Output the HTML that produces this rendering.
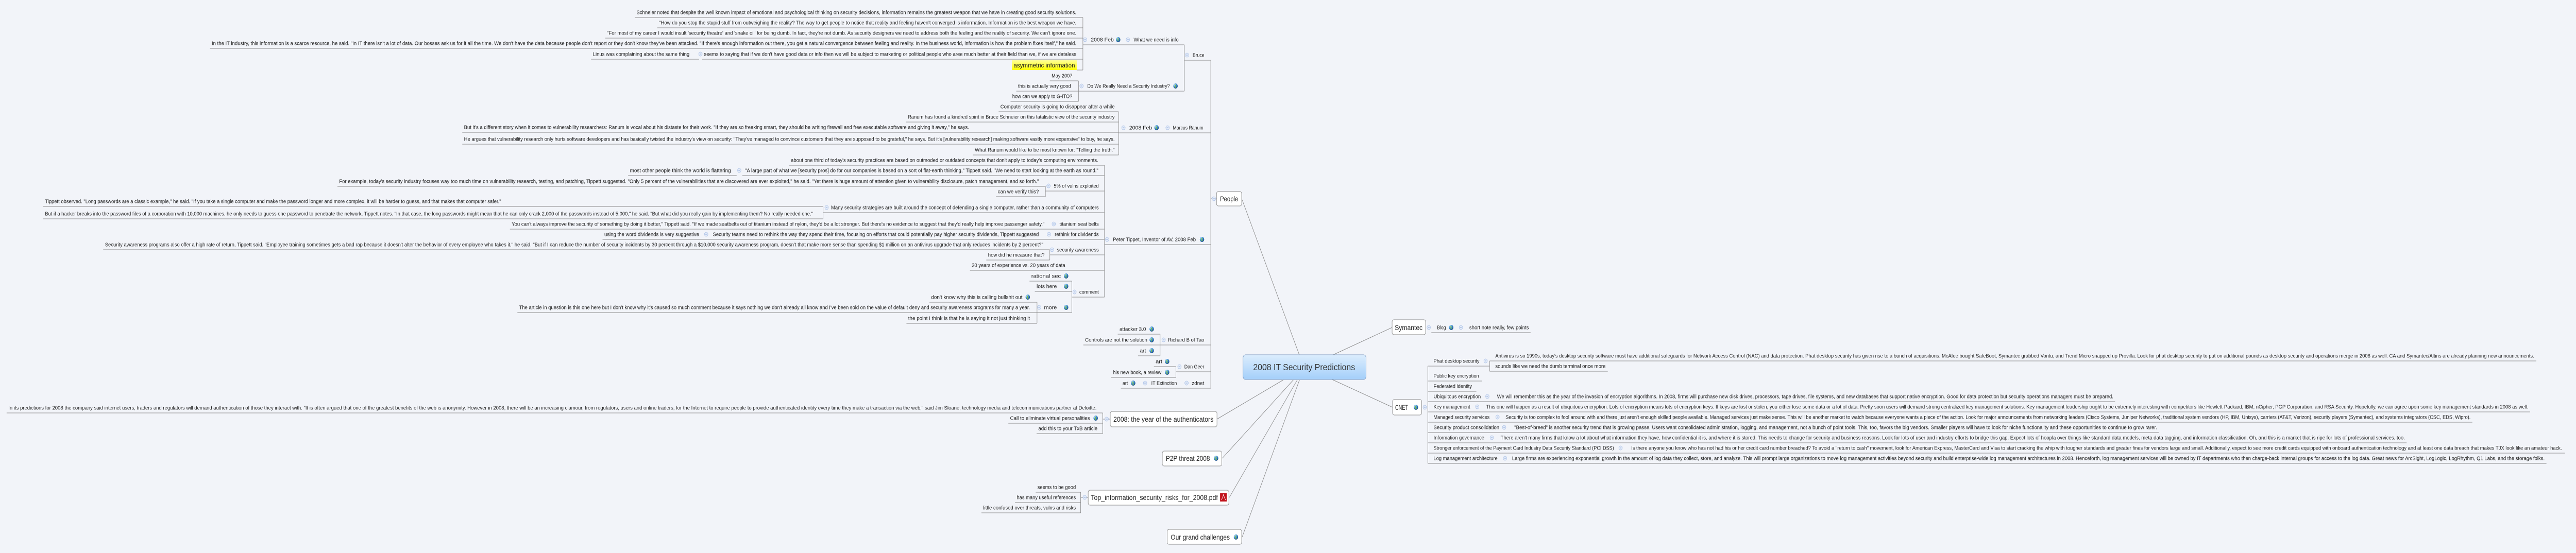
<!DOCTYPE html>
<html><head><meta charset="utf-8"><style>
html,body{margin:0;padding:0;background:#f2f4f9;overflow:hidden;}
svg{display:block;width:100vw;height:100vh}
.t{font-family:"Liberation Sans Narrow","Liberation Sans",sans-serif;font-size:10px;fill:#1b1b1b}
.b{font-family:"Liberation Sans Narrow","Liberation Sans",sans-serif;font-size:14px;fill:#222}
.l{stroke:#8a8a8a;stroke-width:1;fill:none}
.bx{fill:#fff;stroke:#8a8a8a;stroke-width:1}
</style></head><body>
<svg viewBox="0 0 5840 1074" preserveAspectRatio="none" xmlns="http://www.w3.org/2000/svg">
<defs>
<radialGradient id="gg" cx="35%" cy="30%" r="70%"><stop offset="0" stop-color="#d8f0ff"/><stop offset="0.5" stop-color="#3f8fd0"/><stop offset="1" stop-color="#1d4f8a"/></radialGradient>
<g id="g"><circle r="5" fill="url(#gg)"/><path d="M-2,-3 L1,-2 L0,1 L2,3 L-1,3 Z" fill="#7cbf4a"/></g>
<g id="m"><circle r="4" fill="#e3ebf8" stroke="#a9bfe6" stroke-width="0.8"/><line x1="-2" y1="0" x2="2" y2="0" stroke="#7f9dd6" stroke-width="0.8"/></g>
<linearGradient id="cg" x1="0" y1="0" x2="0" y2="1"><stop offset="0" stop-color="#dcedfd"/><stop offset="1" stop-color="#a4cffa"/></linearGradient>
<linearGradient id="yg" x1="0" y1="0" x2="0" y2="1"><stop offset="0" stop-color="#ffff99"/><stop offset="1" stop-color="#ffff00"/></linearGradient>
</defs>
<rect width="5840" height="1074" fill="#f2f4f9"/>

<g class="l">
<line x1="2816" y1="388" x2="2946" y2="690"/>
<line x1="3020" y1="690" x2="3156" y2="636"/>
<line x1="3020" y1="737" x2="3157" y2="791"/>
<line x1="2909" y1="738" x2="2759" y2="814"/>
<line x1="2932" y1="738" x2="2771" y2="890"/>
<line x1="2941" y1="738" x2="2787" y2="966"/>
<line x1="2946" y1="738" x2="2816" y2="1043"/>
</g>

<rect x="2818" y="689" width="279" height="48" rx="6" fill="url(#cg)" stroke="#7d9cc2"/>
<text class="b" x="2841" y="719" style="font-size:18px;fill:#333" textLength="231" lengthAdjust="spacingAndGlyphs">2008 IT Security Predictions</text>

<g class="l">
<line x1="1439" y1="34" x2="2455" y2="34"/>
<line x1="1490" y1="54" x2="2455" y2="54"/>
<line x1="1372" y1="74" x2="2455" y2="74"/>
<line x1="476" y1="94" x2="2455" y2="94"/>
<line x1="1340" y1="115" x2="1585" y2="115"/>
<line x1="1592" y1="115" x2="2455" y2="115"/>
<line x1="2441" y1="136" x2="2455" y2="136"/>
<line x1="2455" y1="34" x2="2455" y2="136"/>
<line x1="2455" y1="87" x2="2555" y2="87"/>
<line x1="2555" y1="87" x2="2685" y2="87"/>
<line x1="2685" y1="87" x2="2685" y2="177"/>
<line x1="2685" y1="117" x2="2745" y2="117"/>
<line x1="2380" y1="157" x2="2445" y2="157"/>
<line x1="2304" y1="177" x2="2445" y2="177"/>
<line x1="2291" y1="197" x2="2445" y2="197"/>
<line x1="2445" y1="157" x2="2445" y2="197"/>
<line x1="2445" y1="177" x2="2685" y2="177"/>
</g>
<text class="t" x="1443" y="27.5" textLength="997" lengthAdjust="spacingAndGlyphs">Schneier noted that despite the well known impact of emotional and psychological thinking on security decisions, information remains the greatest weapon that we have in creating good security solutions.</text>
<text class="t" x="1494" y="47.5" textLength="946" lengthAdjust="spacingAndGlyphs">"How do you stop the stupid stuff from outweighing the reality? The way to get people to notice that reality and feeling haven't converged is information. Information is the best weapon we have.</text>
<text class="t" x="1376" y="67.5" textLength="1064" lengthAdjust="spacingAndGlyphs">"For most of my career I would insult 'security theatre' and 'snake oil' for being dumb. In fact, they're not dumb. As security designers we need to address both the feeling and the reality of security. We can't ignore one.</text>
<text class="t" x="480" y="87.5" textLength="1960" lengthAdjust="spacingAndGlyphs">In the IT industry, this information is a scarce resource, he said. "In IT there isn't a lot of data. Our bosses ask us for it all the time. We don't have the data because people don't report or they don't know they've been attacked. "If there's enough information out there, you get a natural convergence between feeling and reality. In the business world, information is how the problem fixes itself," he said.</text>
<text class="t" x="1344" y="108.5" textLength="219" lengthAdjust="spacingAndGlyphs">Linus was complaining about the same thing</text>
<use href="#m" x="1588" y="105"/>
<text class="t" x="1596" y="108.5" textLength="844" lengthAdjust="spacingAndGlyphs">seems to saying that if we don't have good data or info then we will be subject to marketing or political people who aree much better at their field than we, if we are dataless</text>
<rect x="2294" y="117" width="147" height="19" fill="url(#yg)"/>
<text class="t" x="2298" y="131" style="font-size:12px" textLength="139" lengthAdjust="spacingAndGlyphs">asymmetric information</text>
<use href="#m" x="2460" y="77"/>
<text class="t" x="2473" y="80.5" textLength="52" lengthAdjust="spacingAndGlyphs">2008 Feb</text>
<use href="#g" x="2535" y="77"/>
<use href="#m" x="2557" y="77"/>
<text class="t" x="2570" y="80.5" textLength="102" lengthAdjust="spacingAndGlyphs">What we need is info</text>
<use href="#m" x="2691" y="107"/>
<text class="t" x="2704" y="110.5" textLength="26" lengthAdjust="spacingAndGlyphs">Bruce</text>
<text class="t" x="2384" y="150.5" textLength="47" lengthAdjust="spacingAndGlyphs">May 2007</text>
<text class="t" x="2308" y="170.5" textLength="120" lengthAdjust="spacingAndGlyphs">this is actually very good</text>
<text class="t" x="2295" y="190.5" textLength="136" lengthAdjust="spacingAndGlyphs">how can we apply to G-ITO?</text>
<use href="#m" x="2452" y="167"/>
<text class="t" x="2465" y="170.5" textLength="187" lengthAdjust="spacingAndGlyphs">Do We Really Need a Security Industry?</text>
<use href="#g" x="2665" y="167"/>

<g class="l">
<line x1="2264" y1="217" x2="2536" y2="217"/>
<line x1="2054" y1="237" x2="2536" y2="237"/>
<line x1="1048" y1="257" x2="2536" y2="257"/>
<line x1="1048" y1="280" x2="2536" y2="280"/>
<line x1="2206" y1="301" x2="2536" y2="301"/>
<line x1="2536" y1="217" x2="2536" y2="301"/>
<line x1="2536" y1="258" x2="2745" y2="258"/>
</g>
<text class="t" x="2268" y="210.5" textLength="259" lengthAdjust="spacingAndGlyphs">Computer security is going to disappear after a while</text>
<text class="t" x="2058" y="230.5" textLength="469" lengthAdjust="spacingAndGlyphs">Ranum has found a kindred spirit in Bruce Schneier on this fatalistic view of the security industry</text>
<text class="t" x="1052" y="250.5" textLength="1145" lengthAdjust="spacingAndGlyphs">But it's a different story when it comes to vulnerability researchers: Ranum is vocal about his distaste for their work. "If they are so freaking smart, they should be writing firewall and free executable software and giving it away," he says.</text>
<text class="t" x="1052" y="273.5" textLength="1475" lengthAdjust="spacingAndGlyphs">He argues that vulnerability research only hurts software developers and has basically twisted the industry's view on security: "They've managed to convince customers that they are supposed to be grateful," he says. But it's [vulnerability research] making software vastly more expensive" to buy, he says.</text>
<text class="t" x="2210" y="294.5" textLength="317" lengthAdjust="spacingAndGlyphs">What Ranum would like to be most known for: "Telling the truth."</text>
<use href="#m" x="2547" y="248"/>
<text class="t" x="2560" y="251.5" textLength="52" lengthAdjust="spacingAndGlyphs">2008 Feb</text>
<use href="#g" x="2622" y="248"/>
<use href="#m" x="2647" y="248"/>
<text class="t" x="2659" y="251.5" textLength="69" lengthAdjust="spacingAndGlyphs">Marcus Ranum</text>

<g class="l">
<line x1="1789" y1="321" x2="2504" y2="321"/>
<line x1="1424" y1="341" x2="1670" y2="341"/>
<line x1="1683" y1="341" x2="2504" y2="341"/>
<line x1="765" y1="362" x2="2370" y2="362"/>
<line x1="2258" y1="382" x2="2370" y2="382"/>
<line x1="2370" y1="362" x2="2370" y2="382"/>
<line x1="2370" y1="371" x2="2504" y2="371"/>
<line x1="98" y1="401" x2="1866" y2="401"/>
<line x1="98" y1="425" x2="1866" y2="425"/>
<line x1="1866" y1="401" x2="1866" y2="425"/>
<line x1="1866" y1="413" x2="2504" y2="413"/>
<line x1="1156" y1="445" x2="2504" y2="445"/>
<line x1="1366" y1="465" x2="2504" y2="465"/>
<line x1="234" y1="485" x2="2380" y2="485"/>
<line x1="2236" y1="505" x2="2380" y2="505"/>
<line x1="2380" y1="485" x2="2380" y2="505"/>
<line x1="2380" y1="495" x2="2504" y2="495"/>
<line x1="2199" y1="525" x2="2504" y2="525"/>
<line x1="2334" y1="546" x2="2430" y2="546"/>
<line x1="2346" y1="566" x2="2430" y2="566"/>
<line x1="2107" y1="587" x2="2351" y2="587"/>
<line x1="1173" y1="607" x2="2430" y2="607"/>
<line x1="2055" y1="628" x2="2351" y2="628"/>
<line x1="2351" y1="587" x2="2351" y2="628"/>
<line x1="2430" y1="546" x2="2430" y2="607"/>
<line x1="2430" y1="577" x2="2504" y2="577"/>
<line x1="2504" y1="321" x2="2504" y2="577"/>
<line x1="2504" y1="475" x2="2745" y2="475"/>
</g>
<text class="t" x="1793" y="314.5" textLength="697" lengthAdjust="spacingAndGlyphs">about one third of today's security practices are based on outmoded or outdated concepts that don't apply to today's computing environments.</text>
<text class="t" x="1428" y="334.5" textLength="229" lengthAdjust="spacingAndGlyphs">most other people think the world is flattering</text>
<use href="#m" x="1676" y="331"/>
<text class="t" x="1689" y="334.5" textLength="801" lengthAdjust="spacingAndGlyphs">"A large part of what we [security pros] do for our companies is based on a sort of flat-earth thinking," Tippett said. "We need to start looking at the earth as round."</text>
<text class="t" x="769" y="355.5" textLength="1586" lengthAdjust="spacingAndGlyphs">For example, today's security industry focuses way too much time on vulnerability research, testing, and patching, Tippett suggested. "Only 5 percent of the vulnerabilities that are discovered are ever exploited," he said. "Yet there is huge amount of attention given to vulnerability disclosure, patch management, and so forth."</text>
<text class="t" x="2262" y="375.5" textLength="93" lengthAdjust="spacingAndGlyphs">can we verify this?</text>
<use href="#m" x="2377" y="361"/>
<text class="t" x="2389" y="364.5" textLength="102" lengthAdjust="spacingAndGlyphs">5% of vulns exploited</text>
<text class="t" x="102" y="394.5" textLength="1034" lengthAdjust="spacingAndGlyphs">Tippett observed. "Long passwords are a classic example," he said. "If you take a single computer and make the password longer and more complex, it will be harder to guess, and that makes that computer safer."</text>
<text class="t" x="102" y="418.5" textLength="1741" lengthAdjust="spacingAndGlyphs">But if a hacker breaks into the password files of a corporation with 10,000 machines, he only needs to guess one password to penetrate the network, Tippett notes. "In that case, the long passwords might mean that he can only crack 2,000 of the passwords instead of 5,000," he said. "But what did you really gain by implementing them? No really needed one."</text>
<use href="#m" x="1874" y="403"/>
<text class="t" x="1884" y="406.5" textLength="607" lengthAdjust="spacingAndGlyphs">Many security strategies are built around the concept of defending a single computer, rather than a community of computers</text>
<text class="t" x="1160" y="438.5" textLength="1208" lengthAdjust="spacingAndGlyphs">You can't always improve the security of something by doing it better," Tippett said. "If we made seatbelts out of titanium instead of nylon, they'd be a lot stronger. But there's no evidence to suggest that they'd really help improve passenger safety."</text>
<use href="#m" x="2389" y="435"/>
<text class="t" x="2402" y="438.5" textLength="89" lengthAdjust="spacingAndGlyphs">titanium seat belts</text>
<text class="t" x="1370" y="458.5" textLength="215" lengthAdjust="spacingAndGlyphs">using the word dividends is very suggestive</text>
<use href="#m" x="1601" y="455"/>
<text class="t" x="1616" y="458.5" textLength="739" lengthAdjust="spacingAndGlyphs">Security teams need to rethink the way they spend their time, focusing on efforts that could potentially pay higher security dividends, Tippett suggested</text>
<use href="#m" x="2378" y="455"/>
<text class="t" x="2391" y="458.5" textLength="100" lengthAdjust="spacingAndGlyphs">rethink for dividends</text>
<text class="t" x="238" y="478.5" textLength="2127" lengthAdjust="spacingAndGlyphs">Security awareness programs also offer a high rate of return, Tippett said. "Employee training sometimes gets a bad rap because it doesn't alter the behavior of every employee who takes it," he said. "But if I can reduce the number of security incidents by 30 percent through a $10,000 security awareness program, doesn't that make more sense than spending $1 million on an antivirus upgrade that only reduces incidents by 2 percent?"</text>
<text class="t" x="2240" y="498.5" textLength="128" lengthAdjust="spacingAndGlyphs">how did he measure that?</text>
<use href="#m" x="2385" y="485"/>
<text class="t" x="2396" y="488.5" textLength="95" lengthAdjust="spacingAndGlyphs">security awareness</text>
<text class="t" x="2203" y="518.5" textLength="212" lengthAdjust="spacingAndGlyphs">20 years of experience vs. 20 years of data</text>
<text class="t" x="2338" y="539.5" textLength="67" lengthAdjust="spacingAndGlyphs">rational sec</text>
<use href="#g" x="2417" y="536"/>
<text class="t" x="2350" y="559.5" textLength="46" lengthAdjust="spacingAndGlyphs">lots here</text>
<use href="#g" x="2417" y="556"/>
<text class="t" x="2111" y="580.5" textLength="207" lengthAdjust="spacingAndGlyphs">don't know why this is calling bullshit out</text>
<use href="#g" x="2330" y="577"/>
<text class="t" x="1177" y="600.5" textLength="1158" lengthAdjust="spacingAndGlyphs">The article in question is this one here but I don't know why it's caused so much comment because it says nothing we don't already all know and I've been sold on the value of default deny and security awareness programs for many a year.</text>
<text class="t" x="2059" y="621.5" textLength="276" lengthAdjust="spacingAndGlyphs">the point I think is that he is saying it not just thinking it</text>
<use href="#m" x="2356" y="597"/>
<text class="t" x="2367" y="600.5" textLength="29" lengthAdjust="spacingAndGlyphs">more</text>
<use href="#g" x="2417" y="597"/>
<use href="#m" x="2436" y="567"/>
<text class="t" x="2447" y="570.5" textLength="44" lengthAdjust="spacingAndGlyphs">comment</text>
<use href="#m" x="2510" y="465"/>
<text class="t" x="2523" y="468.5" textLength="188" lengthAdjust="spacingAndGlyphs">Peter Tippet, Inventor of AV, 2008 Feb</text>
<use href="#g" x="2725" y="465"/>

<g class="l">
<line x1="2534" y1="649" x2="2630" y2="649"/>
<line x1="2456" y1="670" x2="2630" y2="670"/>
<line x1="2580" y1="691" x2="2630" y2="691"/>
<line x1="2630" y1="649" x2="2630" y2="691"/>
<line x1="2630" y1="670" x2="2745" y2="670"/>
<line x1="2616" y1="712" x2="2666" y2="712"/>
<line x1="2519" y1="733" x2="2666" y2="733"/>
<line x1="2666" y1="712" x2="2666" y2="733"/>
<line x1="2666" y1="722" x2="2745" y2="722"/>
<line x1="2541" y1="754" x2="2745" y2="754"/>
<line x1="2745" y1="117" x2="2745" y2="754"/>
<line x1="2745" y1="386" x2="2758" y2="386"/>
</g>
<text class="t" x="2538" y="642.5" textLength="60" lengthAdjust="spacingAndGlyphs">attacker 3.0</text>
<use href="#g" x="2611" y="639"/>
<text class="t" x="2460" y="663.5" textLength="141" lengthAdjust="spacingAndGlyphs">Controls are not the solution</text>
<use href="#g" x="2611" y="660"/>
<text class="t" x="2584" y="684.5" textLength="14" lengthAdjust="spacingAndGlyphs">art</text>
<use href="#g" x="2611" y="681"/>
<use href="#m" x="2638" y="660"/>
<text class="t" x="2648" y="663.5" textLength="82" lengthAdjust="spacingAndGlyphs">Richard B of Tao</text>
<text class="t" x="2620" y="705.5" textLength="15" lengthAdjust="spacingAndGlyphs">art</text>
<use href="#g" x="2646" y="702"/>
<text class="t" x="2523" y="726.5" textLength="110" lengthAdjust="spacingAndGlyphs">his new book, a review</text>
<use href="#g" x="2646" y="723"/>
<use href="#m" x="2674" y="712"/>
<text class="t" x="2685" y="715.5" textLength="45" lengthAdjust="spacingAndGlyphs">Dan Geer</text>
<text class="t" x="2545" y="747.5" textLength="12" lengthAdjust="spacingAndGlyphs">art</text>
<use href="#g" x="2569" y="744"/>
<use href="#m" x="2596" y="744"/>
<text class="t" x="2610" y="747.5" textLength="58" lengthAdjust="spacingAndGlyphs">IT Extinction</text>
<use href="#m" x="2690" y="744"/>
<text class="t" x="2702" y="747.5" textLength="28" lengthAdjust="spacingAndGlyphs">zdnet</text>
<rect class="bx" x="2758" y="372" width="57" height="28" rx="4"/>
<use href="#m" x="2752" y="386"/>
<text class="b" x="2766" y="391" textLength="41" lengthAdjust="spacingAndGlyphs">People</text>

<g class="l">
<line x1="15" y1="802" x2="2500" y2="802"/>
<line x1="2286" y1="822" x2="2500" y2="822"/>
<line x1="2350" y1="842" x2="2500" y2="842"/>
<line x1="2500" y1="802" x2="2500" y2="842"/>
<line x1="2500" y1="814" x2="2517" y2="814"/>
</g>
<text class="t" x="19" y="795.5" textLength="2467" lengthAdjust="spacingAndGlyphs">In its predictions for 2008 the company said internet users, traders and regulators will demand authentication of those they interact with.  "It is often argued that one of the greatest benefits of the web is anonymity. However in 2008, there will be an increasing clamour, from regulators, users and online traders, for the Internet to require people to provide authenticated identity every time they make a transaction via the web," said Jim Sloane, technology media and telecommunications partner at Deloitte.</text>
<text class="t" x="2290" y="815.5" textLength="181" lengthAdjust="spacingAndGlyphs">Call to eliminate virtual personalities</text>
<use href="#g" x="2484" y="812"/>
<text class="t" x="2354" y="835.5" textLength="134" lengthAdjust="spacingAndGlyphs">add this to your TxB article</text>
<rect class="bx" x="2517" y="799" width="242" height="30" rx="4"/>
<use href="#m" x="2509" y="814"/>
<text class="b" x="2524" y="819" textLength="227" lengthAdjust="spacingAndGlyphs">2008: the year of the authenticators</text>

<rect class="bx" x="2635" y="876" width="135" height="29" rx="4"/>
<text class="b" x="2643" y="895" textLength="100" lengthAdjust="spacingAndGlyphs">P2P threat 2008</text>
<use href="#g" x="2757" y="890"/>

<g class="l">
<line x1="2348" y1="956" x2="2450" y2="956"/>
<line x1="2301" y1="976" x2="2450" y2="976"/>
<line x1="2225" y1="996" x2="2450" y2="996"/>
<line x1="2450" y1="956" x2="2450" y2="996"/>
<line x1="2450" y1="966" x2="2467" y2="966"/>
</g>
<text class="t" x="2352" y="949.5" textLength="87" lengthAdjust="spacingAndGlyphs">seems to be good</text>
<text class="t" x="2305" y="969.5" textLength="134" lengthAdjust="spacingAndGlyphs">has many useful references</text>
<text class="t" x="2229" y="989.5" textLength="210" lengthAdjust="spacingAndGlyphs">little confused over threats, vulns and risks</text>
<rect class="bx" x="2467" y="952" width="319" height="29" rx="4"/>
<use href="#m" x="2459" y="966"/>
<text class="b" x="2473" y="971" textLength="288" lengthAdjust="spacingAndGlyphs">Top_information_security_risks_for_2008.pdf</text>
<rect x="2766" y="958" width="15" height="16" fill="#c1121b"/>
<path d="M2769,971 C2772,966 2774,962 2773,960 C2775,963 2776,968 2779,971" stroke="#fff" stroke-width="1" fill="none"/>

<rect class="bx" x="2646" y="1028" width="169" height="29" rx="4"/>
<text class="b" x="2654" y="1048" textLength="134" lengthAdjust="spacingAndGlyphs">Our grand challenges</text>
<use href="#g" x="2802" y="1043"/>

<rect class="bx" x="3156" y="621" width="76" height="29" rx="4"/>
<text class="b" x="3162" y="641" textLength="63" lengthAdjust="spacingAndGlyphs">Symantec</text>
<use href="#m" x="3239" y="636"/>
<g class="l">
<line x1="3245" y1="646" x2="3470" y2="646"/>
</g>
<text class="t" x="3258" y="639.5" textLength="20" lengthAdjust="spacingAndGlyphs">Blog</text>
<use href="#g" x="3290" y="636"/>
<use href="#m" x="3312" y="636"/>
<text class="t" x="3331" y="639.5" textLength="135" lengthAdjust="spacingAndGlyphs">short note really, few points</text>

<rect class="bx" x="3157" y="776" width="66" height="30" rx="4"/>
<text class="b" x="3163" y="796" textLength="29" lengthAdjust="spacingAndGlyphs">CNET</text>
<use href="#g" x="3210" y="791"/>
<use href="#m" x="3230" y="791"/>
<g class="l">
<line x1="3237" y1="711" x2="3237" y2="900"/>
<line x1="3237" y1="711" x2="3377" y2="711"/>
<line x1="3377" y1="701" x2="3377" y2="721"/>
<line x1="3377" y1="701" x2="5750" y2="701"/>
<line x1="3377" y1="721" x2="3645" y2="721"/>
<line x1="3237" y1="740" x2="3360" y2="740"/>
<line x1="3237" y1="760" x2="3347" y2="760"/>
<line x1="3237" y1="780" x2="4795" y2="780"/>
<line x1="3237" y1="800" x2="5736" y2="800"/>
<line x1="3237" y1="820" x2="5605" y2="820"/>
<line x1="3237" y1="840" x2="4894" y2="840"/>
<line x1="3237" y1="860" x2="5456" y2="860"/>
<line x1="3237" y1="880" x2="5815" y2="880"/>
<line x1="3237" y1="900" x2="5773" y2="900"/>
</g>
<text class="t" x="3250" y="704.5" textLength="104" lengthAdjust="spacingAndGlyphs">Phat desktop security</text>
<use href="#m" x="3368" y="701"/>
<text class="t" x="3390" y="694.5" textLength="2355" lengthAdjust="spacingAndGlyphs">Antivirus is so 1990s, today's desktop security software must have additional safeguards for Network Access Control (NAC) and data protection. Phat desktop security has given rise to a bunch of acquisitions: McAfee bought SafeBoot, Symantec grabbed Vontu, and Trend Micro snapped up Provilla. Look for phat desktop security to put on additional pounds as desktop security and operations merge in 2008 as well. CA and Symantec/Altiris are already planning new announcements.</text>
<text class="t" x="3390" y="714.5" textLength="250" lengthAdjust="spacingAndGlyphs">sounds like we need the dumb terminal once more</text>
<text class="t" x="3250" y="733.5" textLength="103" lengthAdjust="spacingAndGlyphs">Public key encryption</text>
<text class="t" x="3250" y="753.5" textLength="87" lengthAdjust="spacingAndGlyphs">Federated identity</text>
<text class="t" x="3250" y="773.5" textLength="107" lengthAdjust="spacingAndGlyphs">Ubiquitous encryption</text>
<use href="#m" x="3372" y="770"/>
<text class="t" x="3394" y="773.5" textLength="1397" lengthAdjust="spacingAndGlyphs">We will remember this as the year of the invasion of encryption algorithms. In 2008, firms will purchase new disk drives, processors, tape drives, file systems, and new databases that support native encryption. Good for data protection but security operations managers must be prepared.</text>
<text class="t" x="3250" y="793.5" textLength="83" lengthAdjust="spacingAndGlyphs">Key management</text>
<use href="#m" x="3349" y="790"/>
<text class="t" x="3369" y="793.5" textLength="2363" lengthAdjust="spacingAndGlyphs">This one will happen as a result of ubiquitous encryption. Lots of encryption means lots of encryption keys. If keys are lost or stolen, you either lose some data or a lot of data. Pretty soon users will demand strong centralized key management solutions. Key management leadership ought to be extremely interesting with competitors like Hewlett-Packard, IBM, nCipher, PGP Corporation, and RSA Security. Hopefully, we can agree upon some key management standards in 2008 as well.</text>
<text class="t" x="3250" y="813.5" textLength="127" lengthAdjust="spacingAndGlyphs">Managed security services</text>
<use href="#m" x="3395" y="810"/>
<text class="t" x="3413" y="813.5" textLength="2188" lengthAdjust="spacingAndGlyphs">Security is too complex to fool around with and there just aren't enough skilled people available. Managed services just make sense. This will be another market to watch because everyone wants a piece of the action. Look for major announcements from networking leaders (Cisco Systems, Juniper Networks), traditional system vendors (HP, IBM, Unisys), carriers (AT&amp;T, Verizon), security players (Symantec), and systems integrators (CSC, EDS, Wipro).</text>
<text class="t" x="3250" y="833.5" textLength="149" lengthAdjust="spacingAndGlyphs">Security product consolidation</text>
<use href="#m" x="3410" y="830"/>
<text class="t" x="3433" y="833.5" textLength="1457" lengthAdjust="spacingAndGlyphs">"Best-of-breed" is another security trend that is growing passe. Users want consolidated administration, logging, and management, not a bunch of point tools. This, too, favors the big vendors. Smaller players will have to look for niche functionality and these opportunities to continue to grow rarer.</text>
<text class="t" x="3250" y="853.5" textLength="115" lengthAdjust="spacingAndGlyphs">Information governance</text>
<use href="#m" x="3382" y="850"/>
<text class="t" x="3402" y="853.5" textLength="2050" lengthAdjust="spacingAndGlyphs">There aren't many firms that know a lot about what information they have, how confidential it is, and where it is stored. This needs to change for security and business reasons. Look for lots of user and industry efforts to bridge this gap. Expect lots of hoopla over things like standard data models, meta data tagging, and information classification. Oh, and this is a market that is ripe for lots of professional services, too.</text>
<text class="t" x="3250" y="873.5" textLength="409" lengthAdjust="spacingAndGlyphs">Stronger enforcement of the Payment Card Industry Data Security Standard (PCI DSS)</text>
<use href="#m" x="3674" y="870"/>
<text class="t" x="3698" y="873.5" textLength="2110" lengthAdjust="spacingAndGlyphs">Is there anyone you know who has not had his or her credit card number breached? To avoid a "return to cash" movement, look for American Express, MasterCard and Visa to start cracking the whip with tougher standards and greater fines for vendors large and small. Additionally, expect to see more credit cards equipped with onboard authentication technology and at least one data breach that makes TJX look like an amateur hack.</text>
<text class="t" x="3250" y="893.5" textLength="145" lengthAdjust="spacingAndGlyphs">Log management architecture</text>
<use href="#m" x="3412" y="890"/>
<text class="t" x="3428" y="893.5" textLength="2341" lengthAdjust="spacingAndGlyphs">Large firms are experiencing exponential growth in the amount of log data they collect, store, and analyze. This will prompt large organizations to move log management activities beyond security and build enterprise-wide log management architectures in 2008. Henceforth, log management services will be owned by IT departments who then charge-back internal groups for access to the log data. Great news for ArcSight, LogLogic, LogRhythm, Q1 Labs, and the storage folks.</text>
</svg>
</body></html>
